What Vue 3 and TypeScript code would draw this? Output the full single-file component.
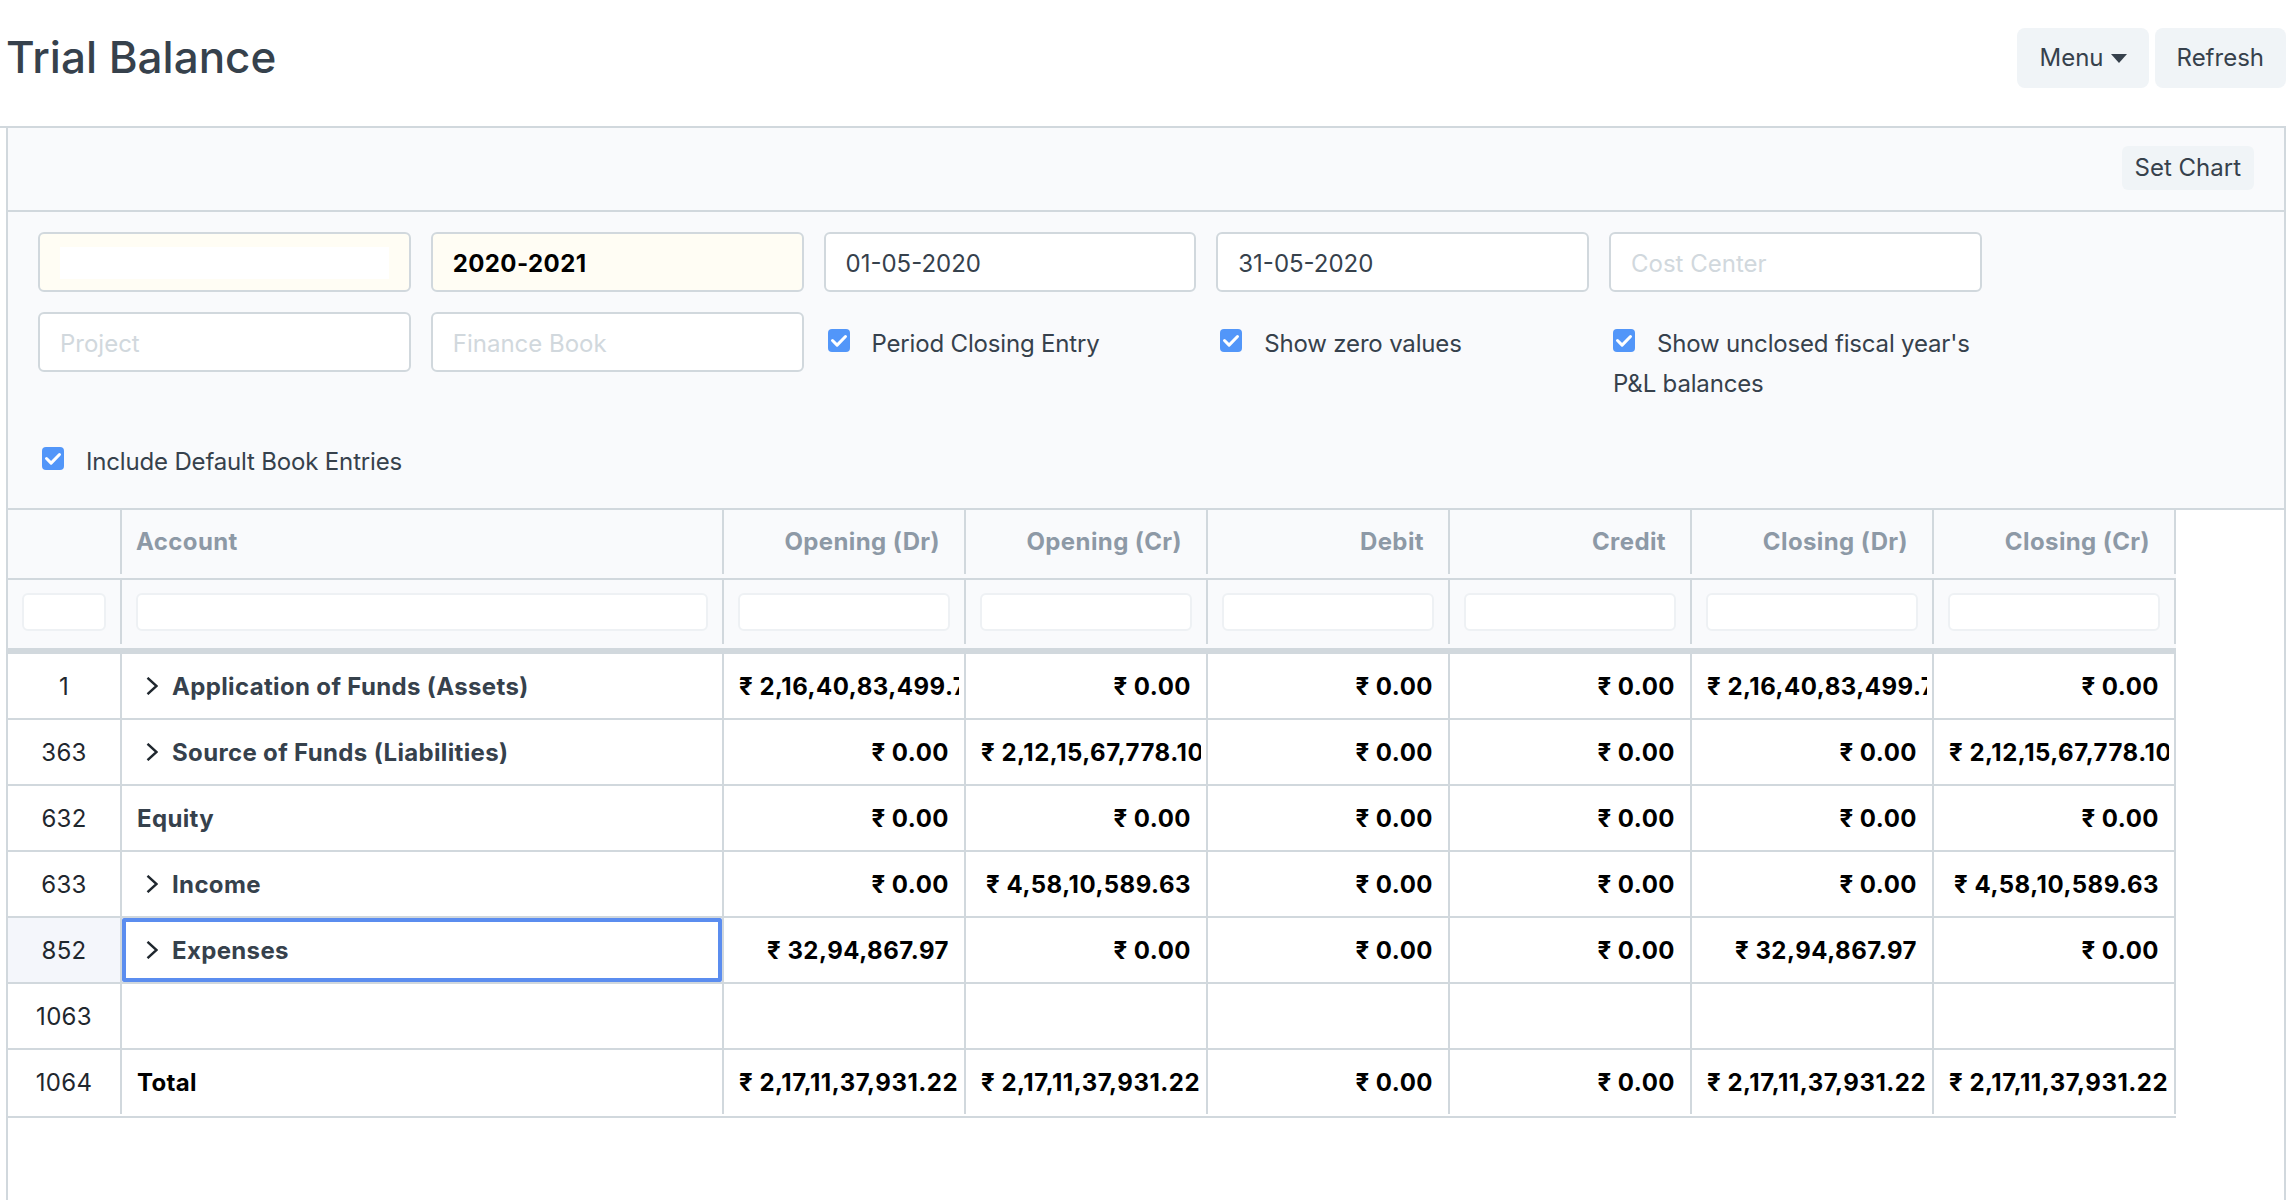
<script setup lang="ts">
type Row = {
    no: number;
    account: string;
    toggle?: boolean;
    total?: boolean;
    focused?: boolean;
    values: string[];
};

const zero = "₹ 0.00";

const columns = ["Opening (Dr)", "Opening (Cr)", "Debit", "Credit", "Closing (Dr)", "Closing (Cr)"];

const rows: Row[] = [
    {
        no: 1,
        account: "Application of Funds (Assets)",
        toggle: true,
        values: ["₹ 2,16,40,83,499.75", zero, zero, zero, "₹ 2,16,40,83,499.75", zero],
    },
    {
        no: 363,
        account: "Source of Funds (Liabilities)",
        toggle: true,
        values: [zero, "₹ 2,12,15,67,778.10", zero, zero, zero, "₹ 2,12,15,67,778.10"],
    },
    { no: 632, account: "Equity", values: [zero, zero, zero, zero, zero, zero] },
    {
        no: 633,
        account: "Income",
        toggle: true,
        values: [zero, "₹ 4,58,10,589.63", zero, zero, zero, "₹ 4,58,10,589.63"],
    },
    {
        no: 852,
        account: "Expenses",
        toggle: true,
        focused: true,
        values: ["₹ 32,94,867.97", zero, zero, zero, "₹ 32,94,867.97", zero],
    },
    { no: 1063, account: "", values: ["", "", "", "", "", ""] },
    {
        no: 1064,
        account: "Total",
        total: true,
        values: ["₹ 2,17,11,37,931.22", "₹ 2,17,11,37,931.22", zero, zero, "₹ 2,17,11,37,931.22", "₹ 2,17,11,37,931.22"],
    },
];
</script>

<template>
    <div class="page">
        <header class="head">
            <h1 class="title">Trial Balance</h1>
            <div class="actions">
                <button class="btn">Menu<span class="caret"></span></button>
                <button class="btn">Refresh</button>
            </div>
        </header>

        <main class="body">
            <div class="toolbar">
                <button class="btn small">Set Chart</button>
            </div>

            <section class="filters">
                <div class="field required"><span class="blank"></span></div>
                <input class="field required strong" value="2020-2021" />
                <input class="field" value="01-05-2020" />
                <input class="field" value="31-05-2020" />
                <input class="field" placeholder="Cost Center" />
                <input class="field" placeholder="Project" />
                <input class="field" placeholder="Finance Book" />
                <label class="check">
                    <svg class="box" viewBox="0 0 22 23"><rect width="22" height="23" rx="4" /><path d="M4.5 11.5l4.6 4.6 8.4-8.6" /></svg>Period Closing Entry
                </label>
                <label class="check">
                    <svg class="box" viewBox="0 0 22 23"><rect width="22" height="23" rx="4" /><path d="M4.5 11.5l4.6 4.6 8.4-8.6" /></svg>Show zero values
                </label>
                <label class="check">
                    <svg class="box" viewBox="0 0 22 23"><rect width="22" height="23" rx="4" /><path d="M4.5 11.5l4.6 4.6 8.4-8.6" /></svg>Show unclosed fiscal year's P&amp;L balances
                </label>
                <label class="check last">
                    <svg class="box" viewBox="0 0 22 23"><rect width="22" height="23" rx="4" /><path d="M4.5 11.5l4.6 4.6 8.4-8.6" /></svg>Include Default Book Entries
                </label>
            </section>

            <div class="table">
                <div class="row head-row">
                    <div class="cell"></div>
                    <div class="cell"><div class="label">Account</div></div>
                    <div v-for="col in columns" :key="col" class="cell"><div class="label right">{{ col }}</div></div>
                </div>

                <div class="row filter-row">
                    <div v-for="n in 8" :key="n" class="cell"><input class="filter" /></div>
                </div>

                <div v-for="row in rows" :key="row.no" class="row" :class="{ total: row.total }">
                    <div class="cell no" :class="{ active: row.focused }">{{ row.no }}</div>
                    <div class="cell">
                        <div class="content name" :class="{ focused: row.focused }">
                            <svg v-if="row.toggle" class="chevron" viewBox="0 0 12 18"><path d="M1.5 0.8l9 8.2-9 8.2" /></svg>
                            <span>{{ row.account }}</span>
                        </div>
                    </div>
                    <div v-for="(val, i) in row.values" :key="i" class="cell">
                        <div class="content amount">{{ val }}</div>
                    </div>
                </div>
            </div>
        </main>
    </div>
</template>

<style>
html,
body {
    background: #fff;
}
</style>

<style scoped>
.page {
    font-family: Inter, "Noto Sans", sans-serif;
    font-size: 24px;
    color: #36414c;
}

/* cabecera */
.head {
    display: flex;
    align-items: center;
    justify-content: space-between;
    height: 116px;
    padding: 0 0 10px 6px;
    border-bottom: 2px solid #d1d8dd;
}

.title {
    margin: 0 0 2px;
    font-size: 44px;
    font-weight: 500;
}

.actions {
    display: flex;
    gap: 6px;
}

.btn {
    height: 60px;
    padding: 0 22px 2px;
    border: 0;
    border-radius: 8px;
    background: #f0f4f7;
    color: #36414c;
    font: inherit;
}

.btn.small {
    height: 44px;
    padding: 0 13px 1px;
    border-radius: 6px;
}

.caret {
    display: inline-block;
    margin-left: 7px;
    vertical-align: 3px;
    border-top: 9px solid #36414c;
    border-left: 8px solid transparent;
    border-right: 8px solid transparent;
}

.body {
    margin-left: 6px;
    min-height: 1072px;
    border-left: 2px solid #d1d8dd;
    border-right: 2px solid #d1d8dd;
}

.toolbar {
    display: flex;
    align-items: center;
    justify-content: flex-end;
    height: 80px;
    padding: 0 30px 2px 0;
    background: #f9fafc;
    border-bottom: 2px solid #d1d8dd;
}

/* filtros */
.filters {
    display: grid;
    grid-template-columns: repeat(5, 372.75px);
    column-gap: 20px;
    row-gap: 20px;
    align-items: start;
    padding: 20px 0 26px 30px;
    background: #f9fafc;
    border-bottom: 2px solid #d1d8dd;
}

.field {
    box-sizing: border-box;
    display: flex;
    align-items: center;
    width: 100%;
    height: 60px;
    padding: 2px 20px 0;
    border: 2px solid #d1d8dd;
    border-radius: 6px;
    background: #fff;
    color: #36414c;
    font: inherit;
}

.field::placeholder {
    color: #d1d8dd;
    opacity: 1;
}

.field.required {
    background: #fffdf4;
}

.field.strong {
    color: #000;
    font-weight: 700;
    letter-spacing: 0.4px;
}

.blank {
    width: 332px;
    height: 32px;
    background: #fff;
}

.check {
    display: block;
    padding: 12px 0 0 4px;
    line-height: 40px;
    letter-spacing: -0.17px;
}

.check.last {
    margin-top: 6px;
}

.box {
    width: 22px;
    height: 23px;
    margin-right: 22px;
    vertical-align: 0;
}

.box rect {
    fill: #5296f9;
}

.box path {
    fill: none;
    stroke: #fff;
    stroke-width: 3;
    stroke-linecap: round;
    stroke-linejoin: round;
}

/* tabla */
.row {
    display: grid;
    grid-template-columns: 114px 602px repeat(6, 242px);
    width: 2168px;
    border-bottom: 2px solid #d1d8dd;
}

.cell {
    box-sizing: border-box;
    display: flex;
    align-items: center;
    min-width: 0;
    height: 64px;
    border-right: 2px solid #d1d8dd;
}

.head-row,
.filter-row {
    padding-bottom: 4px;
    background: #f9fafc;
}

.filter-row {
    border-bottom-width: 6px;
}

.row:last-child {
    padding-bottom: 2px;
}

.label {
    flex: 1;
    padding: 0 0 2px 14px;
    color: #8d99a6;
    font-weight: 700;
    letter-spacing: 0.4px;
}

.label.right {
    padding-right: 24px;
    text-align: right;
}

.filter {
    box-sizing: border-box;
    width: 100%;
    height: 38px;
    margin: 0 14px;
    border: 2px solid #eef1f4;
    border-radius: 6px;
    background: #fff;
    min-width: 0;
}

.no {
    justify-content: center;
    color: #1f272e;
    letter-spacing: 0.3px;
}

.no.active {
    background: #f4f6fb;
}

.content {
    flex: 1;
    min-width: 0;
    margin: 0 5px;
    padding: 0 10px;
    overflow: hidden;
    white-space: nowrap;
}

.name {
    display: flex;
    align-items: center;
    font-weight: 700;
    letter-spacing: 0.35px;
}

.amount {
    color: #000;
    font-weight: 700;
    letter-spacing: 0.5px;
    text-align: right;
}

.total .name {
    color: #000;
}

.focused {
    align-self: stretch;
    margin: 0;
    padding: 0 11px;
    border: 4px solid #5b8def;
    border-radius: 2px;
}

.chevron {
    flex: none;
    width: 12px;
    height: 18px;
    margin: 0 14px 0 9px;
}

.chevron path {
    fill: none;
    stroke: #1f272e;
    stroke-width: 2.4;
}
</style>
